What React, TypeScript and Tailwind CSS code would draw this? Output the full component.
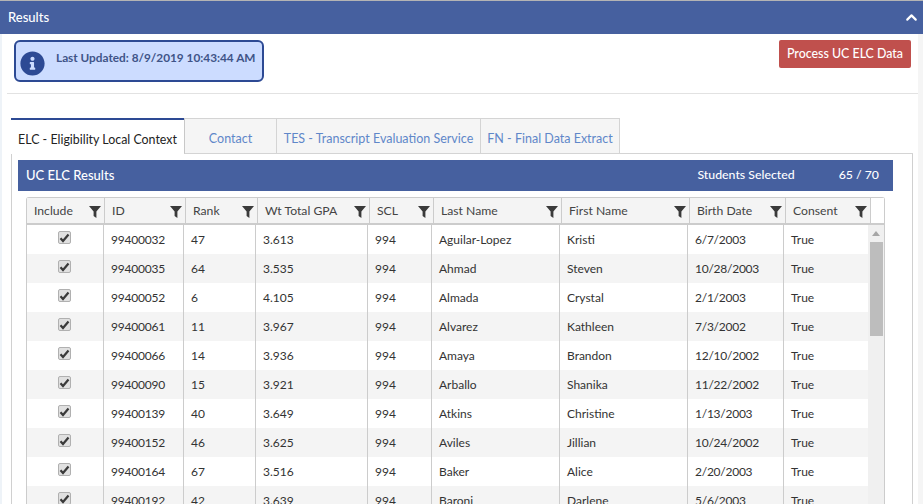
import { ChevronUp } from 'lucide-react';
import { FaInfoCircle } from 'react-icons/fa';

const HEAD_COLS = [
  { label: 'Include', w: 'w-[78px]' },
  { label: 'ID', w: 'w-[81px]' },
  { label: 'Rank', w: 'w-[72px]' },
  { label: 'Wt Total GPA', w: 'w-[112px]' },
  { label: 'SCL', w: 'w-[64px]' },
  { label: 'Last Name', w: 'w-[128px]' },
  { label: 'First Name', w: 'w-[128px]' },
  { label: 'Birth Date', w: 'w-[96px]' },
  { label: 'Consent', w: 'w-[85px]' },
];

const ROWS = [
  ['99400032', '47', '3.613', '994', 'Aguilar-Lopez', 'Kristi', '6/7/2003'],
  ['99400035', '64', '3.535', '994', 'Ahmad', 'Steven', '10/28/2003'],
  ['99400052', '6', '4.105', '994', 'Almada', 'Crystal', '2/1/2003'],
  ['99400061', '11', '3.967', '994', 'Alvarez', 'Kathleen', '7/3/2002'],
  ['99400066', '14', '3.936', '994', 'Amaya', 'Brandon', '12/10/2002'],
  ['99400090', '15', '3.921', '994', 'Arballo', 'Shanika', '11/22/2002'],
  ['99400139', '40', '3.649', '994', 'Atkins', 'Christine', '1/13/2003'],
  ['99400152', '46', '3.625', '994', 'Aviles', 'Jillian', '10/24/2002'],
  ['99400164', '67', '3.516', '994', 'Baker', 'Alice', '2/20/2003'],
  ['99400192', '42', '3.639', '994', 'Baroni', 'Darlene', '5/6/2003'],
];

const BODY_W = [
  'w-[80px] tracking-[-0.2px]',
  'w-[72px]',
  'w-[112px]',
  'w-[64px]',
  'w-[128px]',
  'w-[128px]',
  'w-[96px] tracking-[-0.25px]',
];

function FilterIcon() {
  return (
    <svg width="12" height="13" viewBox="0 0 12 13" className="shrink-0">
      <path d="M0 1h12L7.4 6.4V13L4.6 11V6.4z" fill="#3a3a3a" />
    </svg>
  );
}

function CheckBox() {
  return (
    <div className="flex h-[13px] w-[13px] items-center justify-center rounded-[2px] border border-[#b0b0b0] bg-[#e0e0e0]">
      <svg width="11" height="10" viewBox="0 0 11 10">
        <path d="M1.5 5.2 4 8l5.5-6.5" fill="none" stroke="#3a3a3a" strokeWidth="2.2" />
      </svg>
    </div>
  );
}

export default function App() {
  return (
    <div className="h-[504px] w-[923px] overflow-hidden bg-white font-['Lato',sans-serif] text-[12px] text-[#333333]">
      <div className="h-px bg-[#b4b4b4]" />
      <div className="flex h-[33px] items-center justify-between bg-[#46609f] pl-2 pr-[3px] text-[13px] font-medium text-white">
        <span>Results</span>
        <ChevronUp size={17} strokeWidth={3} />
      </div>

      <div className="flex h-[470px]">
        <div className="w-[2px] bg-[#eef3f8]" />
        <div className="min-w-0 flex-1 pl-[5px]">
          {/* Last updated + process button */}
          <div className="flex h-[60px] items-start justify-between border-b border-[#e2e2e2] pl-[7px] pr-[7px] pt-[6px]">
            <div className="flex h-[42px] w-[250px] items-center gap-[11px] rounded-[6px] border-2 border-[#2d4a94] bg-[#ccdcff] pl-1">
              <FaInfoCircle size={25} className="mt-[5px] shrink-0 text-[#2d4a94]" />
              <span className="mb-1.5 whitespace-nowrap text-[11.8px] font-bold text-[#3f5488]">Last Updated: 8/9/2019 10:43:44 AM</span>
            </div>
            <button className="h-[28px] w-[132px] rounded-[2px] bg-[#c0504d] text-[12.4px] font-medium text-white">Process UC ELC Data</button>
          </div>

          <div className="flex pl-1 pr-[5px] pt-[24px]">
            <div className="w-[903px]">
              {/* Tabs */}
              <div className="flex h-[36px] text-[12.5px] text-[#5f87c9]">
                <div className="flex w-[173px] items-center justify-center border-t-2 border-[#2d4a94] bg-white pt-1.5 text-[12.4px] text-[#222222]">ELC - Eligibility Local Context</div>
                <div className="flex w-[93px] items-center justify-center border border-[#d4d4d4] border-l-[#c8c8c8] bg-[#f5f5f5] pt-1.5">Contact</div>
                <div className="flex w-[204px] items-center justify-center border-y border-r border-[#d4d4d4] bg-[#f5f5f5] pt-1.5">TES - Transcript Evaluation Service</div>
                <div className="flex w-[139px] items-center justify-center border-y border-r border-[#d4d4d4] bg-[#f5f5f5] pt-1.5">FN - Final Data Extract</div>
                <div className="flex-1 border-b border-[#d4d4d4]" />
              </div>

              {/* Tab panel */}
              <div className="h-[350px] overflow-hidden border-x border-[#d0d0d0] pl-[6px] pt-[6px]">
                <div className="flex h-[31px] w-[875px] items-center justify-between bg-[#46609f] pl-2 pr-[14px] font-medium text-white">
                  <span className="text-[13px]">UC ELC Results</span>
                  <div className="flex text-[12.3px]">
                    <span>Students Selected</span>
                    <span className="ml-[44px]">65 / 70</span>
                  </div>
                </div>

                {/* Grid */}
                <div className="ml-2 mt-[6px] w-[859px] rounded-t-[3px] border-x border-t border-[#cccccc]">
                  <div className="flex h-[27px] border-b-2 border-[#cccccc] bg-white">
                    {HEAD_COLS.map((col) => (
                      <div key={col.label} className={`flex shrink-0 items-center justify-between border-r border-[#cccccc] bg-[#f4f4f4] pl-[7px] pr-[3px] pt-[2px] text-[12.2px] text-[#444444] ${col.w}`}>
                        <span className="whitespace-nowrap">{col.label}</span>
                        <FilterIcon />
                      </div>
                    ))}
                  </div>
                  <div className="flex">
                    <div className="w-[841px] shrink-0">
                      {ROWS.map((row, i) => (
                        <div key={row[0]} className={`flex h-[29px] ${i % 2 === 1 ? 'bg-[#f4f4f4]' : 'bg-white'}`}>
                          <div className="flex w-[77px] shrink-0 justify-center border-r border-[#cccccc] pt-[6px] pr-[2px]">
                            <CheckBox />
                          </div>
                          {row.map((cell, c) => (
                            <div key={c} className={`flex shrink-0 items-center border-r border-[#cccccc] pl-[7px] ${BODY_W[c]}`}>{cell}</div>
                          ))}
                          <div className="flex flex-1 items-center pl-[7px]">True</div>
                        </div>
                      ))}
                    </div>
                    <div className="flex w-[16px] flex-col items-center bg-[#f0f0f0]">
                      <div className="flex h-[17px] items-center">
                        <div className="h-0 w-0 border-x-[4px] border-b-[5px] border-x-transparent border-b-[#a6a6a6]" />
                      </div>
                      <div className="h-[94px] w-[13px] bg-[#bdbdbd]" />
                    </div>
                  </div>
                </div>
              </div>
            </div>
          </div>
        </div>
        <div className="w-[5px] shrink-0 bg-[#f5f5f5]" />
      </div>
    </div>
  );
}
